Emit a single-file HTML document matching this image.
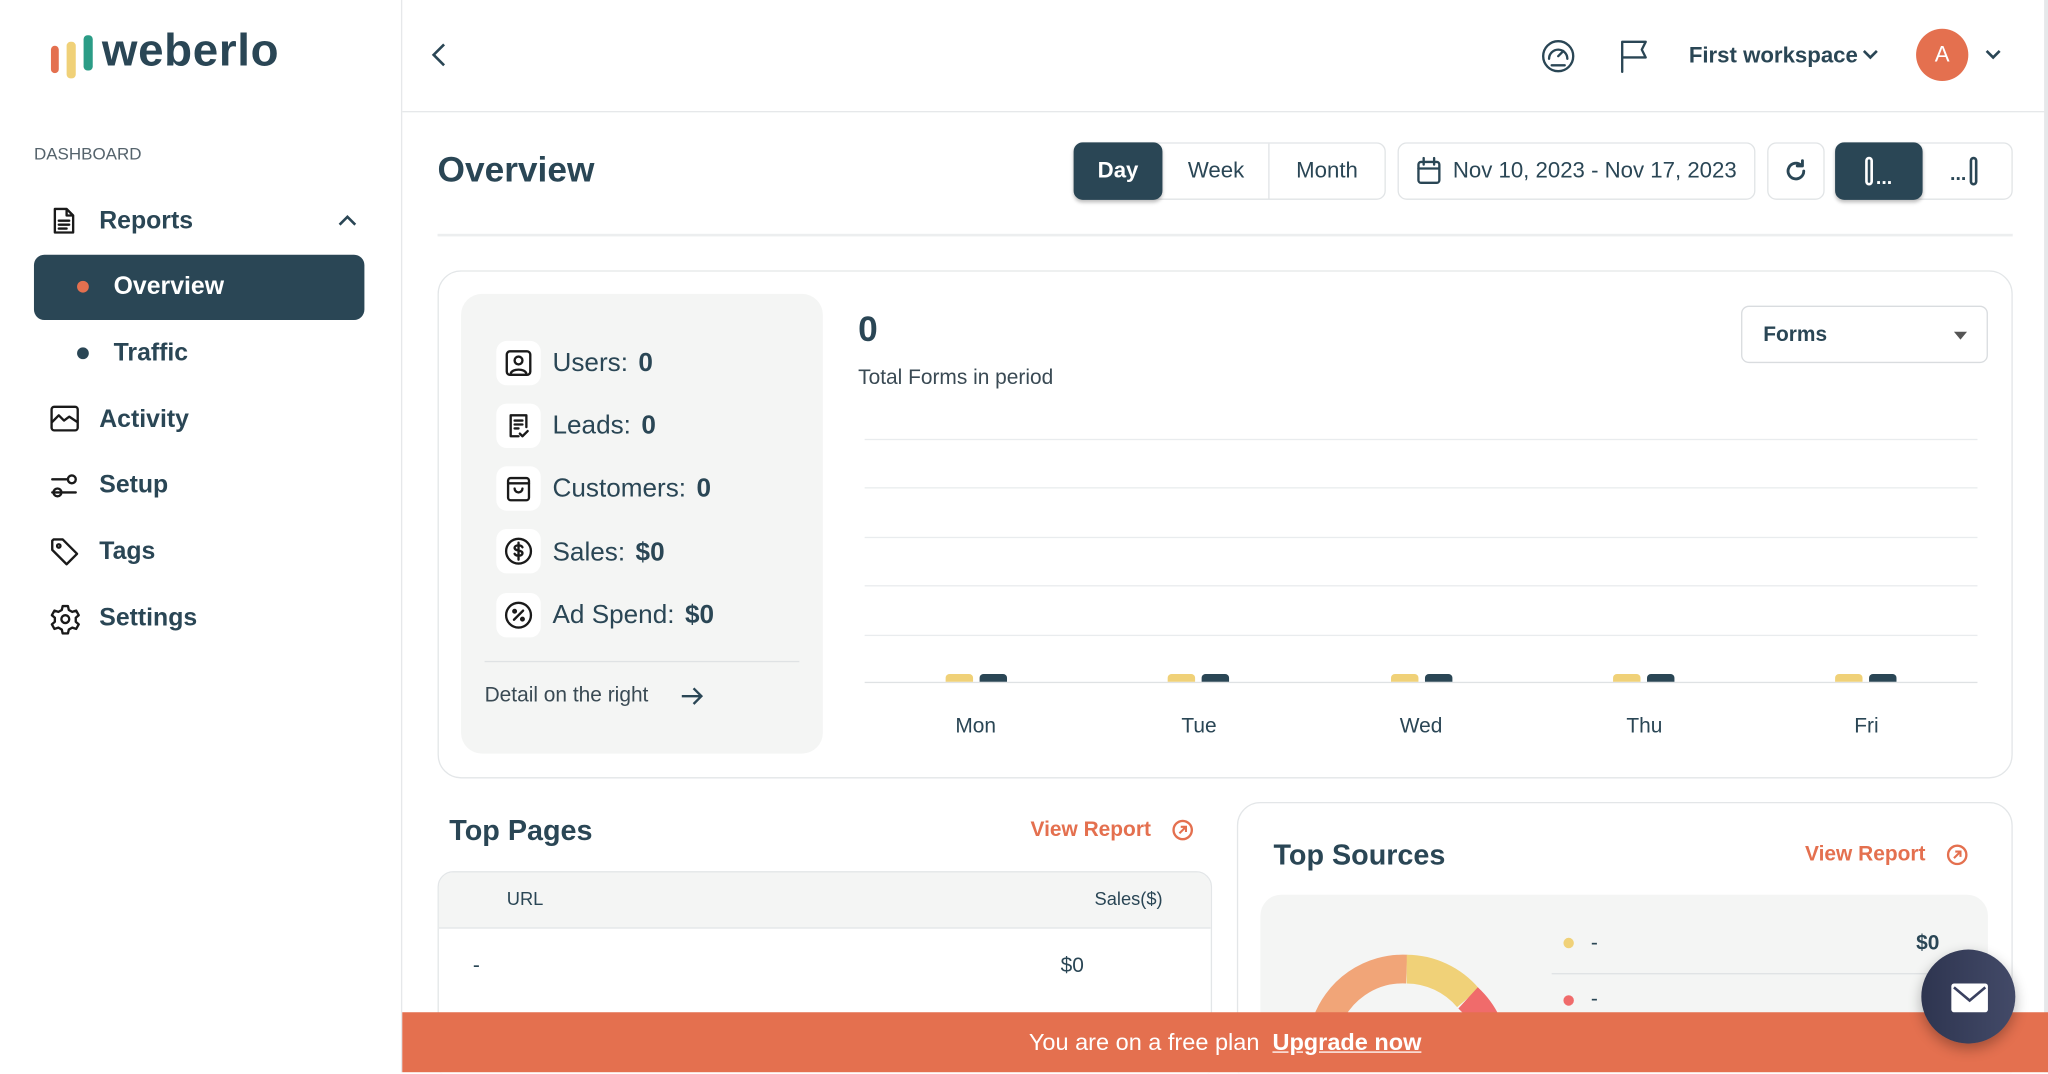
<!DOCTYPE html>
<html><head><meta charset="utf-8"><style>
*{box-sizing:border-box;margin:0;padding:0}
body{width:2048px;height:1074px;overflow:hidden;background:#fff;font-family:"Liberation Sans",sans-serif;color:#2a4655}
#w{position:absolute;left:0;top:0;width:1568px;height:822px;transform:scale(1.30612);transform-origin:0 0;overflow:hidden}
.a{position:absolute}
.nav{font-size:19px;font-weight:bold;color:#2a4655}
.ic{stroke:#1a1a1a;fill:none;stroke-width:1.8;stroke-linecap:round;stroke-linejoin:round}
.btn{position:absolute;top:109px;height:44px;border:1px solid #e1e4e6;border-radius:7px;background:#fff;font-size:17px;display:flex;align-items:center;justify-content:center;color:#2a4655}
.grid{position:absolute;left:662px;width:852px;height:1px;background:#e9ecee}
.bar{position:absolute;top:516px;width:21px;height:6px;border-radius:3px 3px 0 0}
.day{position:absolute;top:547px;font-size:16px;color:#2a4655;width:60px;text-align:center}
.st{position:absolute;left:380px;width:34px;height:34px;background:#fff;border-radius:8px}
.sl{position:absolute;left:423px;font-size:20px;color:#2a4655}
.sl b{margin-left:8px}
</style></head><body><div id="w">
<div class="a" style="left:307px;top:0;width:1px;height:822px;background:#e6e8ea"></div>
<div class="a" style="left:39px;top:35px;width:6px;height:21px;background:#e4704f;border-radius:3px"></div>
<div class="a" style="left:51px;top:32px;width:7px;height:28px;background:#f0d178;border-radius:3px"></div>
<div class="a" style="left:64px;top:27px;width:7px;height:27px;background:#2b9c86;border-radius:3px"></div>
<div class="a" style="left:78px;top:19px;font-size:35px;font-weight:bold;color:#2a4655;letter-spacing:0.5px">weberlo</div>
<div class="a" style="left:26px;top:110px;font-size:13px;color:#55636c">DASHBOARD</div>
<svg class="a ic" style="left:38px;top:158px" width="22" height="22" viewBox="0 0 22 22"><path d="M4 2h9l5 5v13H4z M13 2v5h5 M7 11h8 M7 14h8 M7 17h6"/></svg>
<div class="a nav" style="left:76px;top:159px">Reports</div>
<svg class="a" style="left:258px;top:163px" width="16" height="12"><path d="M2 9l6-6 6 6" stroke="#2a4655" stroke-width="2" fill="none"/></svg>
<div class="a" style="left:26px;top:195px;width:253px;height:50px;background:#2a4655;border-radius:8px"></div>
<div class="a" style="left:59px;top:215px;width:9px;height:9px;border-radius:50%;background:#e4704f"></div>
<div class="a nav" style="left:87px;top:209px;color:#fff">Overview</div>
<div class="a" style="left:59px;top:266px;width:9px;height:9px;border-radius:50%;background:#2a4655"></div>
<div class="a nav" style="left:87px;top:260px">Traffic</div>
<svg class="a ic" style="left:38px;top:310px" width="24" height="22"><rect x="1.5" y="1.5" width="20" height="18" rx="2"/><path d="M2 13l5-5 4 4 4-3 6 4"/></svg>
<div class="a nav" style="left:76px;top:311px">Activity</div>
<svg class="a ic" style="left:38px;top:362px" width="24" height="20"><circle cx="17" cy="5" r="3"/><path d="M2 5h12 M2 15h18"/><circle cx="6" cy="15" r="3"/></svg>
<div class="a nav" style="left:76px;top:361px">Setup</div>
<svg class="a ic" style="left:38px;top:411px" width="24" height="24"><path d="M2 3v7l11 11 8-8L10 2H3z"/><circle cx="7" cy="7" r="1.3"/></svg>
<div class="a nav" style="left:76px;top:412px">Tags</div>
<svg class="a ic" style="left:38px;top:462px" width="24" height="24" viewBox="0 0 24 24"><circle cx="12" cy="12" r="3"/><path d="M10 2h4l.7 3 2.6 1.5 3-1 2 3.5-2.3 2v3l2.3 2-2 3.5-3-1-2.6 1.5-.7 3h-4l-.7-3-2.6-1.5-3 1-2-3.5 2.3-2v-3L1.7 9l2-3.5 3 1L9.3 5z"/></svg>
<div class="a nav" style="left:76px;top:463px">Settings</div>
<div class="a" style="left:308px;top:85px;width:1260px;height:1px;background:#e6e8ea"></div>
<svg class="a" style="left:328px;top:32px" width="16" height="20"><path d="M12 2L4 10l8 8" stroke="#2a4655" stroke-width="2" fill="none"/></svg>
<svg class="a ic" style="left:1179px;top:29px;stroke:#2a4655" width="28" height="28"><circle cx="14" cy="14" r="11.5"/><path d="M14 14l4-4 M7 16a7 7 0 0 1 14 0 M9 21h10"/></svg>
<svg class="a ic" style="left:1239px;top:29px;stroke:#2a4655" width="26" height="28"><path d="M3 26V3h18l-3 6 3 6H3"/></svg>
<div class="a" style="left:1293px;top:33px;font-size:17px;font-weight:bold">First workspace</div>
<svg class="a" style="left:1425px;top:37px" width="14" height="10"><path d="M2 2l5 5 5-5" stroke="#2a4655" stroke-width="2" fill="none"/></svg>
<div class="a" style="left:1467px;top:22px;width:40px;height:40px;border-radius:50%;background:#e4704f;color:#fff;font-size:17px;display:flex;align-items:center;justify-content:center">A</div>
<svg class="a" style="left:1519px;top:37px" width="14" height="10"><path d="M2 2l5 5 5-5" stroke="#2a4655" stroke-width="2" fill="none"/></svg>
<div class="a" style="left:1565px;top:0;width:3px;height:822px;background:#e6e8ea"></div>
<div class="a" style="left:335px;top:115px;font-size:27px;font-weight:bold">Overview</div>
<div class="btn" style="left:822px;width:239px"></div>
<div class="btn" style="left:822px;width:68px;background:#2a4655;color:#fff;border-color:#2a4655;font-weight:bold;box-shadow:0 2px 3px rgba(0,0,0,.25)">Day</div>
<div class="a" style="left:890px;top:114px;width:82px;font-size:17px;text-align:center;line-height:34px">Week</div>
<div class="a" style="left:971px;top:110px;width:1px;height:42px;background:#e1e4e6"></div>
<div class="a" style="left:972px;top:114px;width:88px;font-size:17px;text-align:center;line-height:34px">Month</div>
<div class="btn" style="left:1070px;width:274px"><svg class="ic" style="stroke:#2a4655;margin-right:8px" width="20" height="22"><rect x="2" y="4" width="16" height="16" rx="2"/><path d="M6 1v5 M14 1v5 M2 9h16"/></svg>Nov 10, 2023 - Nov 17, 2023</div>
<div class="btn" style="left:1353px;width:44px"><svg class="ic" style="stroke:#2a4655;stroke-width:2.2" width="20" height="20"><path d="M16 10a6 6 0 1 1-2-4.5 M15 2v4h-4"/></svg></div>
<div class="btn" style="left:1405px;width:136px"></div>
<div class="btn" style="left:1405px;width:67px;background:#2a4655;border-color:#2a4655;color:#fff;font-size:15px;font-weight:bold;box-shadow:0 2px 3px rgba(0,0,0,.25)"><span style="border:2px solid #fff;width:6px;height:22px;border-radius:3px;display:inline-block;margin-right:2px"></span><span style="margin-top:10px">...</span></div>
<div class="a" style="left:1493px;top:118px;font-size:15px;font-weight:bold;display:flex;align-items:flex-end;height:24px"><span>...</span><span style="border:2px solid #2a4655;width:6px;height:22px;border-radius:3px;display:inline-block;margin-left:2px"></span></div>
<div class="a" style="left:335px;top:179px;width:1206px;height:2px;background:#eceeef"></div>
<div class="a" style="left:335px;top:207px;width:1206px;height:389px;border:1px solid #e3e6e8;border-radius:18px"></div>
<div class="a" style="left:353px;top:225px;width:277px;height:352px;background:#f4f5f4;border-radius:16px"></div>
<div class="st" style="top:261px"></div><svg class="a ic" style="left:386px;top:267px" width="22" height="22"><rect x="2" y="2" width="18" height="18" rx="2.5"/><circle cx="11" cy="9" r="3"/><path d="M5 19c1-4 11-4 12 0"/></svg>
<div class="sl" style="top:267px">Users:<b>0</b></div>
<div class="st" style="top:309px"></div><svg class="a ic" style="left:386px;top:315px" width="22" height="22"><path d="M11 19H5V3h12v9 M8 7h6 M8 10h6 M8 13h3 M12 17l2 2 4-4"/></svg>
<div class="sl" style="top:315px">Leads:<b>0</b></div>
<div class="st" style="top:357px"></div><svg class="a ic" style="left:386px;top:363px" width="22" height="22"><rect x="3" y="3" width="16" height="17" rx="2"/><path d="M3 7h16 M8 11a3 3 0 0 0 6 0"/></svg>
<div class="sl" style="top:363px">Customers:<b>0</b></div>
<div class="st" style="top:405px"></div><svg class="a ic" style="left:386px;top:411px" width="22" height="22"><circle cx="11" cy="11" r="9.5"/><path d="M14 8c-1-2-6-2-6 .5s6 1.5 6 4-5 2.5-6 .5 M11 4.5v13"/></svg>
<div class="sl" style="top:412px">Sales:<b>$0</b></div>
<div class="st" style="top:454px"></div><svg class="a ic" style="left:386px;top:460px" width="22" height="22"><circle cx="11" cy="11" r="9.5"/><path d="M14.5 7.5l-7 7"/><circle cx="8" cy="8" r="1"/><circle cx="14" cy="14" r="1"/></svg>
<div class="sl" style="top:460px">Ad Spend:<b>$0</b></div>
<div class="a" style="left:371px;top:506px;width:241px;height:1px;background:#dfe2e4"></div>
<div class="a" style="left:371px;top:524px;font-size:16px;color:#3a4a54">Detail on the right</div>
<svg class="a" style="left:520px;top:524px" width="20" height="18"><path d="M2 9h15 M11 3l6 6-6 6" stroke="#2a4655" stroke-width="1.8" fill="none"/></svg>
<div class="a" style="left:657px;top:237px;font-size:27px;font-weight:bold">0</div>
<div class="a" style="left:657px;top:281px;font-size:16px;color:#3a4a54">Total Forms in period</div>
<div class="a" style="left:1333px;top:234px;width:189px;height:44px;border:1px solid #d9dcdf;border-radius:6px"></div>
<div class="a" style="left:1350px;top:248px;font-size:16px;font-weight:bold">Forms</div>
<svg class="a" style="left:1495px;top:253px" width="12" height="8"><path d="M1 1h10L6 7z" fill="#555"/></svg>
<div class="grid" style="top:336px"></div><div class="grid" style="top:373px"></div><div class="grid" style="top:411px"></div><div class="grid" style="top:448px"></div><div class="grid" style="top:486px"></div><div class="grid" style="top:522px;background:#dfe2e4"></div>
<div class="bar" style="left:724px;background:#f0d178"></div><div class="bar" style="left:750px;background:#2a4655"></div>
<div class="bar" style="left:894px;background:#f0d178"></div><div class="bar" style="left:920px;background:#2a4655"></div>
<div class="bar" style="left:1065px;background:#f0d178"></div><div class="bar" style="left:1091px;background:#2a4655"></div>
<div class="bar" style="left:1235px;background:#f0d178"></div><div class="bar" style="left:1261px;background:#2a4655"></div>
<div class="bar" style="left:1405px;background:#f0d178"></div><div class="bar" style="left:1431px;background:#2a4655"></div>
<div class="day" style="left:717px;top:548px">Mon</div><div class="day" style="left:888px;top:548px">Tue</div><div class="day" style="left:1058px;top:548px">Wed</div><div class="day" style="left:1229px;top:548px">Thu</div><div class="day" style="left:1399px;top:548px">Fri</div>
<div class="a" style="left:344px;top:623px;font-size:22px;font-weight:bold">Top Pages</div>
<div class="a" style="left:789px;top:627px;font-size:16px;font-weight:bold;color:#e4704f">View Report</div>
<svg class="a" style="left:897px;top:627px" width="17" height="17"><circle cx="8.5" cy="8.5" r="7" stroke="#e4704f" stroke-width="1.8" fill="none"/><path d="M6 11l5-5 M7 6h4v4" stroke="#e4704f" stroke-width="1.6" fill="none"/></svg>
<div class="a" style="left:335px;top:667px;width:593px;height:160px;border:1px solid #e3e6e8;border-radius:12px;overflow:hidden"><div style="height:43px;background:#f4f5f4;border-bottom:1px solid #e3e6e8"></div></div>
<div class="a" style="left:388px;top:680px;font-size:14px">URL</div>
<div class="a" style="left:838px;top:680px;font-size:14px">Sales($)</div>
<div class="a" style="left:362px;top:731px;font-size:16px">-</div>
<div class="a" style="left:812px;top:731px;font-size:16px">$0</div>
<div class="a" style="left:947px;top:614px;width:594px;height:220px;border:1px solid #e3e6e8;border-radius:18px"></div>
<div class="a" style="left:975px;top:642px;font-size:22px;font-weight:bold">Top Sources</div>
<div class="a" style="left:1382px;top:646px;font-size:16px;font-weight:bold;color:#e4704f">View Report</div>
<svg class="a" style="left:1490px;top:646px" width="17" height="17"><circle cx="8.5" cy="8.5" r="7" stroke="#e4704f" stroke-width="1.8" fill="none"/><path d="M6 11l5-5 M7 6h4v4" stroke="#e4704f" stroke-width="1.6" fill="none"/></svg>
<div class="a" style="left:965px;top:685px;width:557px;height:140px;background:#f4f5f4;border-radius:16px"></div>
<svg class="a" style="left:990px;top:725px" width="180" height="60"><path d="M25 60 A62 62 0 0 1 87 17" stroke="#f1a578" stroke-width="22" fill="none"/><path d="M87 17 A62 62 0 0 1 134 39" stroke="#f0d178" stroke-width="22" fill="none"/><path d="M134 39 A62 62 0 0 1 149 60" stroke="#f06b6b" stroke-width="22" fill="none"/></svg>
<div class="a" style="left:1197px;top:718px;width:8px;height:8px;border-radius:50%;background:#f0d178"></div>
<div class="a" style="left:1218px;top:714px;font-size:16px">-</div>
<div class="a" style="left:1467px;top:714px;font-size:16px;font-weight:bold">$0</div>
<div class="a" style="left:1188px;top:745px;width:305px;height:1px;background:#dfe2e4"></div>
<div class="a" style="left:1197px;top:762px;width:8px;height:8px;border-radius:50%;background:#f06b6b"></div>
<div class="a" style="left:1218px;top:757px;font-size:16px">-</div>
<div class="a" style="left:308px;top:775px;width:1260px;height:46px;background:#e4704f;color:#fff;font-size:18px;text-align:center;line-height:46px;padding-left:0">You are on a free plan&nbsp; <u style="font-weight:bold">Upgrade now</u></div>
<div class="a" style="left:0;top:821px;width:1568px;height:20px;background:#fff"></div>
<div class="a" style="left:1471px;top:727px;width:72px;height:72px;border-radius:50%;background:linear-gradient(90deg,#2e3550,#434a68);box-shadow:0 4px 10px rgba(0,0,0,.3)"></div>
<svg class="a" style="left:1493px;top:752px" width="30" height="24"><rect x="1" y="1" width="28" height="22" rx="2" fill="#fff"/><path d="M3 4l12 10 12-10" stroke="#3a4160" stroke-width="2" fill="none"/></svg>
</div></body></html>
